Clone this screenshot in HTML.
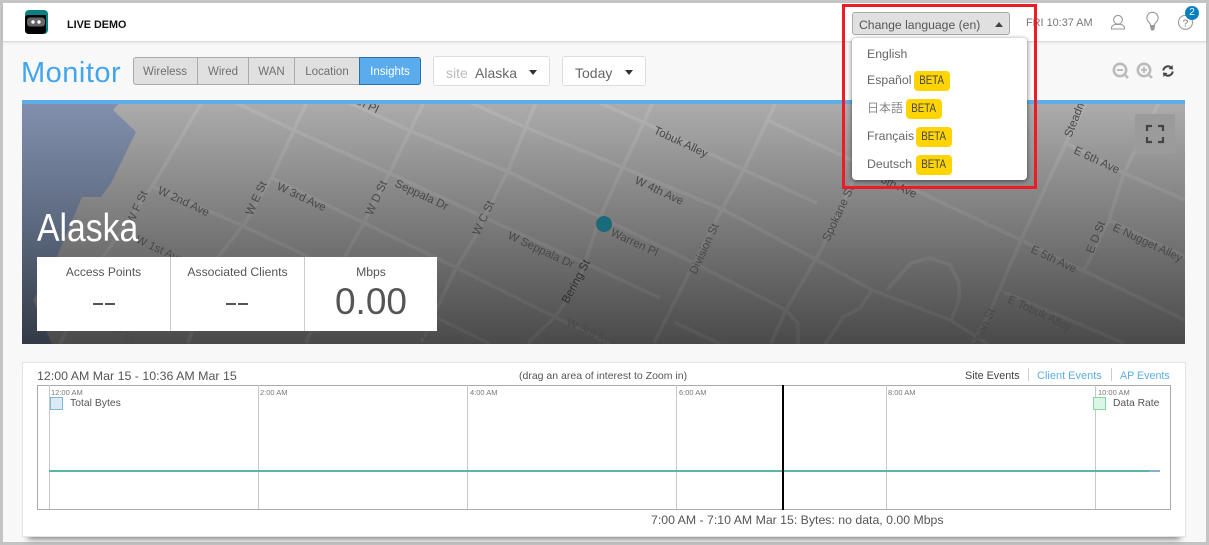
<!DOCTYPE html>
<html><head><meta charset="utf-8"><style>
html,body{margin:0;padding:0;width:1209px;height:545px;overflow:hidden;background:#c4c4c4}
*{box-sizing:border-box}
body{font-family:"Liberation Sans","Noto Sans CJK JP",sans-serif;color:#555;position:relative}
.a{position:absolute;white-space:nowrap}
.tab{position:absolute;top:0;height:28px;line-height:31px;text-align:center;font-size:11.5px;color:#707070;border-right:1px solid #aaa}
.li{position:absolute;left:15px;font-size:12.3px;line-height:17px;height:17px;color:#666;white-space:nowrap}
.beta{position:absolute;width:36px;height:20px;background:#ffd400;border-radius:4px;color:#444;font-size:11.5px;line-height:20px;text-align:center}
.beta span{display:inline-block;transform:scaleX(.85)}
svg text{font-family:"Liberation Sans",sans-serif;font-size:11.5px;fill:#484848}
.hl{position:absolute;top:385px;width:1px;height:124px;background:#c8c8c8}
.tk{position:absolute;top:388px;font-size:7.5px;color:#777;white-space:nowrap}
</style></head><body>
<div class="a" style="left:3px;top:3px;width:1203px;height:539px;background:#f8f8f8"></div>
<div class="a" style="left:3px;top:3px;width:1203px;height:39px;background:#fff;border-bottom:1px solid #ddd;box-shadow:0 1px 2px rgba(0,0,0,.08)"></div>

<svg class="a" style="left:24px;top:9px" width="26" height="27" viewBox="0 0 26 27"><rect x="1" y="1" width="23" height="24" rx="4" fill="#0c7f83"/><path d="M1 9 Q1 6 4 6 H22 V21 Q22 25 18 25 H5 Q1 25 1 21Z" fill="#030303"/><rect x="3" y="8.5" width="18" height="9" rx="3" fill="#666"/><circle cx="9" cy="13" r="1.7" fill="#fff"/><circle cx="15" cy="13" r="1.7" fill="#fff"/></svg>
<div class="a" style="left:67px;top:19px;font-size:10.8px;font-weight:bold;color:#111">LIVE DEMO</div>

<div class="a" style="left:21px;top:56px;font-size:29px;color:#44a6ea;letter-spacing:.5px;line-height:34px;font-weight:normal">Monitor</div>

<div class="a" style="left:133px;top:57px;width:288px;height:28px;background:#e0e0e0;border:1px solid #aaa;border-radius:3px"></div>
<div class="a" style="left:133px;top:57px;width:288px;height:28px">
<div class="tab" style="left:0;width:65px">Wireless</div>
<div class="tab" style="left:65px;width:51px">Wired</div>
<div class="tab" style="left:116px;width:46px">WAN</div>
<div class="tab" style="left:162px;width:65px">Location</div>
<div class="tab" style="left:226px;width:62px;background:#5aaced;border:1px solid #2a6fa8;border-radius:0 3px 3px 0;color:#fff;line-height:29px">Insights</div>
</div>

<div class="a" style="left:433px;top:56px;width:117px;height:30px;background:#fff;border:1px solid #ddd;border-radius:3px"></div>
<div class="a" style="left:446px;top:65px;font-size:14px;color:#bbb">site</div>
<div class="a" style="left:475px;top:65px;font-size:14px;color:#666">Alaska</div>
<div class="a" style="left:529px;top:70px;width:0;height:0;border-left:4.5px solid transparent;border-right:4.5px solid transparent;border-top:5px solid #333"></div>
<div class="a" style="left:562px;top:56px;width:84px;height:30px;background:#fff;border:1px solid #ddd;border-radius:3px"></div>
<div class="a" style="left:575px;top:65px;font-size:14px;color:#666">Today</div>
<div class="a" style="left:625px;top:70px;width:0;height:0;border-left:4.5px solid transparent;border-right:4.5px solid transparent;border-top:5px solid #333"></div>

<svg class="a" style="left:1110px;top:60px" width="70" height="24" viewBox="0 0 70 24" fill="none">
<g stroke="#bbb" stroke-width="2.6"><circle cx="10" cy="10" r="6.2"/><path d="M14.5 14.5 L18 18"/><path d="M7 10H13" stroke-width="2"/><circle cx="34" cy="10" r="6.2"/><path d="M38.5 14.5 L42 18"/><path d="M31 10H37M34 7V13" stroke-width="2"/></g>
<g stroke="#444" stroke-width="2"><path d="M53.3 10.5A4.8 4.8 0 0 1 60.5 7"/><path d="M62.7 11.5A4.8 4.8 0 0 1 55.5 15"/></g>
<path d="M62.5 5L63 9.5L58.5 9Z M53.5 17L53 12.5L57.5 13Z" fill="#444"/>
</svg>

<!-- map -->
<svg class="a" style="left:22px;top:100px" width="1163" height="244" viewBox="22 100 1163 244">
<defs><linearGradient id="g" x1="0" y1="0" x2="0" y2="1"><stop offset="0" stop-color="#adadad"/><stop offset="1" stop-color="#4a4a4a"/></linearGradient>
<linearGradient id="w" x1="0" y1="0" x2="0" y2="1"><stop offset="0" stop-color="#8391af"/><stop offset=".5" stop-color="#5d6a80"/><stop offset="1" stop-color="#323a46"/></linearGradient>
<linearGradient id="r" gradientUnits="userSpaceOnUse" x1="0" y1="100" x2="0" y2="344"><stop offset="0" stop-color="#b6b6b6"/><stop offset="1" stop-color="#525252"/></linearGradient></defs>
<rect x="22" y="100" width="1163" height="244" fill="url(#g)"/>
<path d="M22 100H122L113 110L136 132L111 183L101 197H82L50 273L33 300L52 344H22Z" fill="url(#w)"/>
<g fill="none" stroke="url(#r)" stroke-width="3.6">
<path d="M203 100L155 182L103 257L60 344"/>
<path d="M308 100L272 177L245 223L218 257L188 343"/>
<path d="M425 100L390 172L364 223L337 270L306 343"/>
<path d="M537 100L509 168L475 237L455 270L421 343"/>
<path d="M654 100L623 167L600 217L578 283L555 317L528 343"/>
<path d="M777 100L744 170L720 213L689 273L654 343"/>
<path d="M890 100L852 183L821 250L786 310L771 343"/>
<path d="M1086 103L1066 143L1021 240L992 307L973 343"/>
<path d="M1159 103L1124 173L1109 220L1086 267"/>
<path d="M230 100L298 132L387 172L505 227L600 270L660 298"/>
<path d="M272 178L364 223L455 267L555 317L610 344"/>
<path d="M153 187L241 225L421 310L490 344"/>
<path d="M344 100L413 132L509 172L600 217L674 253L786 310L798 323V344"/>
<path d="M471 103L532 130L600 158L724 210L817 260L872 290L950 320L988 344"/>
<path d="M600 103L643 122L744 170L817 203"/>
<path d="M767 120L1021 240L1082 270L1185 320"/>
<path d="M1066 143L1124 173L1185 200"/>
<path d="M1109 220L1185 257"/>
<path d="M1004 292L1124 343"/>
<path d="M1086 267L1082 270"/>
<path d="M887 290L911 263L930 258L950 265L959 283L959 300L951 320"/>
<path d="M872 290L860 308L843 317L833 333L825 344"/>
<path d="M674 322L720 344"/>
</g>
<text transform="translate(157 193) rotate(25)">W 2nd Ave</text>
<text transform="translate(276 189) rotate(25)">W 3rd Ave</text>
<text transform="translate(394 186) rotate(25)">Seppala Dr</text>
<text transform="translate(507 238) rotate(25)">W Seppala Dr</text>
<text transform="translate(135 242) rotate(25)">W 1st Ave</text>
<text transform="translate(133 225) rotate(-65)">W F St</text>
<text transform="translate(252 216) rotate(-65)">W E St</text>
<text transform="translate(372 216) rotate(-65)">W D St</text>
<text transform="translate(479 236) rotate(-65)">W C St</text>
<text transform="translate(568 304) rotate(-62)" style="fill:#2e2e2e">Bering St</text>
<text transform="translate(566 325) rotate(25)">W 3rd Ave</text>
<text transform="translate(610 235) rotate(25)">Warren Pl</text>
<text transform="translate(653 133) rotate(25)">Tobuk Alley</text>
<text transform="translate(634 183) rotate(25)">W 4th Ave</text>
<text transform="translate(696 275) rotate(-65)">Division St</text>
<text transform="translate(829 242) rotate(-65)">Spokane St</text>
<text transform="translate(880 182) rotate(25)">5th Ave</text>
<text transform="translate(1071 138) rotate(-68)">Steadman St</text>
<text transform="translate(1073 153) rotate(25)">E 6th Ave</text>
<text transform="translate(1030 252) rotate(25)">E 5th Ave</text>
<text transform="translate(1093 254) rotate(-68)">E D St</text>
<text transform="translate(1112 230) rotate(25)">E Nugget Alley</text>
<text transform="translate(1007 302) rotate(25)">E Tobuk Alley</text>
<text transform="translate(970 365) rotate(-65)">Freeman St</text>
<text transform="translate(95 326) rotate(25)">River St</text>
<text transform="translate(422 354) rotate(-65)">W C St</text>
<text transform="translate(337 95) rotate(25)">W 4th Pl</text>
<circle cx="604" cy="224" r="8" fill="#1a6a7c"/>
<rect x="1135" y="114" width="40" height="40" rx="2" fill="#9b9b9b"/>
<path d="M1147 131V126H1152M1158 126H1163V131M1163 137V142H1158M1152 142H1147V137" fill="none" stroke="#444" stroke-width="2.2"/>
</svg>
<div class="a" style="left:22px;top:100px;width:1163px;height:4px;background:#5dade8"></div>

<div class="a" style="left:37px;top:207px;font-size:39px;color:#fff;line-height:44px;transform:scaleX(.865);transform-origin:0 0">Alaska</div>
<div class="a" style="left:37px;top:257px;width:400px;height:74px;background:#fff"></div>
<div class="a" style="left:170px;top:257px;width:1px;height:74px;background:#ccc"></div>
<div class="a" style="left:304px;top:257px;width:1px;height:74px;background:#ccc"></div>
<div class="a" style="left:37px;top:265px;width:133px;text-align:center;font-size:12px;color:#555">Access Points</div>
<div class="a" style="left:171px;top:265px;width:133px;text-align:center;font-size:12.2px;color:#555">Associated Clients</div>
<div class="a" style="left:305px;top:265px;width:132px;text-align:center;font-size:12.2px;color:#555">Mbps</div>
<div class="a" style="left:93px;top:303px;width:22px;height:2px;border-left:10px solid #555;border-right:10px solid #555"></div>
<div class="a" style="left:226px;top:303px;width:22px;height:2px;border-left:10px solid #555;border-right:10px solid #555"></div>
<div class="a" style="left:305px;top:279px;width:132px;text-align:center;font-size:37px;color:#555;line-height:46px">0.00</div>

<!-- header right -->
<div class="a" style="left:852px;top:12px;width:158px;height:23px;background:#e0e0e0;border:1px solid #aaa;border-radius:3px"></div>
<div class="a" style="left:859px;top:18px;font-size:12.2px;color:#555">Change language (en)</div>
<div class="a" style="left:995px;top:22px;width:0;height:0;border-left:4.5px solid transparent;border-right:4.5px solid transparent;border-bottom:5px solid #444"></div>
<div class="a" style="left:1026px;top:17px;font-size:10.9px;color:#777">FRI 10:37 AM</div>
<svg class="a" style="left:1108px;top:10px" width="90" height="26" viewBox="0 0 90 26" fill="none" stroke="#999" stroke-width="1.1">
<circle cx="10" cy="9.8" r="4.4"/><path d="M3.5 19V17.8Q3.5 15.5 7 14.5H13Q16.5 15.5 16.5 17.8V19Z"/>
<path d="M42.5 15.5Q42.5 13.5 41 12.3A5.6 5.6 0 1 1 48 12.3Q46.5 13.5 46.5 15.5Z"/><path d="M42.5 16.5H46.5L45.5 20H43.5Z" fill="#999"/>
<circle cx="77.5" cy="12.3" r="7"/><text x="74.5" y="16.5" style="font-size:10.5px;fill:#777;stroke:none">?</text></svg>
<div class="a" style="left:1185px;top:6px;width:14px;height:14px;border-radius:50%;background:#0a7fc0;color:#fff;font-size:10px;line-height:14px;text-align:center">2</div>

<!-- dropdown -->
<div class="a" style="left:852px;top:38px;width:175px;height:142px;background:#fff;border-radius:4px;box-shadow:0 1px 5px rgba(0,0,0,.55)">
<div class="li" style="top:8px">English</div>
<div class="li" style="top:34px">Español</div><div class="beta" style="left:62px;top:33px"><span>BETA</span></div>
<div class="li" style="top:62px;color:#888;font-size:12px">日本語</div><div class="beta" style="left:54px;top:61px"><span>BETA</span></div>
<div class="li" style="top:90px">Français</div><div class="beta" style="left:64px;top:89px"><span>BETA</span></div>
<div class="li" style="top:118px">Deutsch</div><div class="beta" style="left:64px;top:117px"><span>BETA</span></div>
</div>
<div class="a" style="left:842px;top:4px;width:195px;height:185px;border:3px solid #ed1c24"></div>

<!-- chart card -->
<div class="a" style="left:22px;top:362px;width:1164px;height:175px;background:#fff;border:1px solid #e4e4e4;box-shadow:0 8px 6px -6px rgba(0,0,0,.5)"></div>
<div class="a" style="left:37px;top:369px;font-size:12.4px;color:#555">12:00 AM Mar 15 - 10:36 AM Mar 15</div>
<div class="a" style="left:519px;top:370px;font-size:10.5px;color:#555">(drag an area of interest to Zoom in)</div>
<div class="a" style="left:965px;top:370px;font-size:10.8px;color:#444">Site Events</div>
<div class="a" style="left:1028px;top:368px;width:1px;height:13px;background:#ccc"></div>
<div class="a" style="left:1037px;top:370px;font-size:11px;color:#5dade8">Client Events</div>
<div class="a" style="left:1111px;top:368px;width:1px;height:13px;background:#ccc"></div>
<div class="a" style="left:1120px;top:370px;font-size:10.7px;color:#5dade8">AP Events</div>
<div class="a" style="left:37px;top:385px;width:1134px;height:125px;border:1px solid #aaa"></div>
<div class="hl" style="left:49px"></div><div class="hl" style="left:258px"></div><div class="hl" style="left:467px"></div><div class="hl" style="left:676px"></div><div class="hl" style="left:886px"></div><div class="hl" style="left:1095px"></div>
<div class="tk" style="left:51px">12:00 AM</div><div class="tk" style="left:260px">2:00 AM</div><div class="tk" style="left:470px">4:00 AM</div><div class="tk" style="left:679px">6:00 AM</div><div class="tk" style="left:888px">8:00 AM</div><div class="tk" style="left:1098px">10:00 AM</div>
<div class="a" style="left:50px;top:397px;width:13px;height:13px;background:#dceaf5;border:1px solid #7db8e0"></div>
<div class="a" style="left:70px;top:398px;font-size:10.4px;color:#555">Total Bytes</div>
<div class="a" style="left:1093px;top:397px;width:13px;height:13px;background:#dcf5e6;border:1px solid #80d8a8"></div>
<div class="a" style="left:1113px;top:398px;font-size:10.3px;color:#555">Data Rate</div>
<div class="a" style="left:49px;top:470px;width:1100px;height:2px;background:#5ab5a5"></div>
<div class="a" style="left:1149px;top:470px;width:11px;height:2px;background:#86aedb"></div>
<div class="a" style="left:782px;top:385px;width:2px;height:125px;background:#000"></div>
<div class="a" style="left:651px;top:513px;font-size:12.3px;color:#555">7:00 AM - 7:10 AM Mar 15: Bytes: no data, 0.00 Mbps</div>
</body></html>
